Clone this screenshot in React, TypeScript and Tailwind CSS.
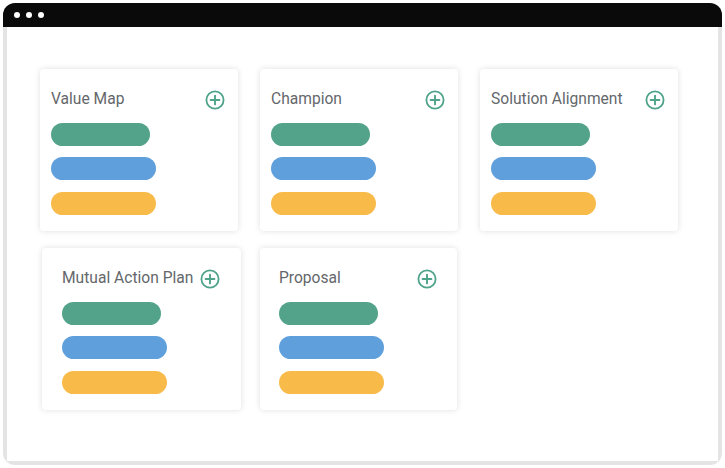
import React from 'react';

type Card = { title: string; pl: string; pr: string; w: string };

const rowOne: Card[] = [
  { title: 'Value Map', pl: 'pl-[11px]', pr: 'pr-[13px]', w: 'w-[198px]' },
  { title: 'Champion', pl: 'pl-[11px]', pr: 'pr-[13px]', w: 'w-[198px]' },
  { title: 'Solution Alignment', pl: 'pl-[11px]', pr: 'pr-[13px]', w: 'w-[198px]' },
];

const rowTwo: Card[] = [
  { title: 'Mutual Action Plan', pl: 'pl-[20px]', pr: 'pr-[21px]', w: 'w-[199px]' },
  { title: 'Proposal', pl: 'pl-[19px]', pr: 'pr-[20px]', w: 'w-[197px]' },
];

function PlusCircle() {
  return (
    <svg width="20" height="20" viewBox="0 0 20 20" fill="none" className="shrink-0">
      <circle cx="10" cy="10" r="8.6" stroke="#4fa38a" strokeWidth="1.8" />
      <path d="M10 5.6v8.8M5.6 10h8.8" stroke="#4fa38a" strokeWidth="1.9" strokeLinecap="round" />
    </svg>
  );
}

function StageCard({ card }: { card: Card }) {
  return (
    <div
      className={`${card.w} h-[162px] ${card.pl} ${card.pr} pt-[20px] bg-white rounded-[4px] shadow-[0_0_6px_rgba(0,0,0,0.13)]`}
    >
      <div className="h-[22px] flex items-center justify-between">
        <span className="text-[15.6px] text-[#64676b] leading-none">{card.title}</span>
        <PlusCircle />
      </div>
      <div className="mt-[11.5px] flex flex-col gap-[11.5px]">
        <div className="h-[23px] w-[99px] rounded-full bg-[#52a38a]" />
        <div className="h-[23px] w-[105px] rounded-full bg-[#5fa0dc]" />
        <div className="h-[23px] w-[105px] rounded-full bg-[#f8bb49]" />
      </div>
    </div>
  );
}

export default function App() {
  return (
    <div className="w-[725px] h-[468px] bg-white p-[3px]" style={{ fontFamily: 'Roboto, "Liberation Sans", sans-serif' }}>
      <div className="w-[719px] h-[462px] rounded-[12px] overflow-hidden bg-[#e4e4e4] flex flex-col">
        {/* window bar */}
        <div className="h-[24px] bg-[#0a0a0a] flex items-center gap-[6px] pl-[11px]">
          <span className="w-[6px] h-[6px] rounded-full bg-white" />
          <span className="w-[6px] h-[6px] rounded-full bg-white" />
          <span className="w-[6px] h-[6px] rounded-full bg-white" />
        </div>

        <div className="flex-1 mx-[4px] mb-[4px] bg-white pt-[42px] pl-[33px]">
          <div className="flex gap-[22px]">
            {rowOne.map((c) => (
              <StageCard key={c.title} card={c} />
            ))}
          </div>
          <div className="flex gap-[19px] mt-[17px] ml-[2px]">
            {rowTwo.map((c) => (
              <StageCard key={c.title} card={c} />
            ))}
          </div>
        </div>
      </div>
    </div>
  );
}
